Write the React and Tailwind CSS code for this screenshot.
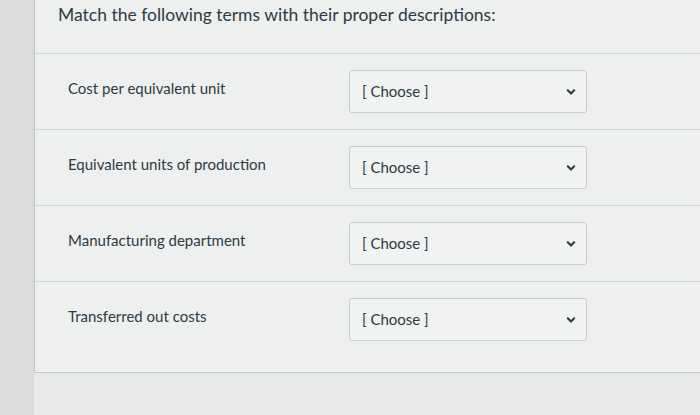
import React from "react";

function Chevron() {
  return (
    <svg width="12" height="12" viewBox="0 0 12 12" fill="none">
      <path d="M2.8 4.3 L6 7.6 L9.2 4.3" stroke="#2d3b45" strokeWidth="2.1" strokeLinecap="round" strokeLinejoin="round" />
    </svg>
  );
}

function Row({ label, last }) {
  return (
    <div className={`flex items-start border-t border-[#d2d6d5] ${last ? "h-[90px]" : "h-[76px]"}`}>
      <div className="w-[314px] pl-[33px] pt-[23px] text-[15px] text-[#2d3b45]">{label}</div>
      <div className="mt-[16px] w-[238px] h-[43px] border border-[#c7cccb] rounded-[3px] bg-[#f1f3f2] flex items-center justify-between pl-[12px] pr-[9px]">
        <span className="text-[15px] text-[#2d3b45]">[ Choose ]</span>
        <Chevron />
      </div>
    </div>
  );
}

export default function App() {
  return (
    <div className="w-[700px] h-[415px] flex bg-[#e7eae8] overflow-hidden" style={{ fontFamily: "Lato, 'Noto Sans', sans-serif" }}>
      <div className="w-[34px] h-full bg-[#d9dcdb] shrink-0" />
      <div className="flex-1 flex flex-col">
        <div className="h-[373px] bg-[#eef0ef] border-l border-b border-[#c3c8c7] flex flex-col">
          <div className="h-[53px] pl-[23px] pt-[1px] text-[17.5px] text-[#2d3b45] leading-[28px]">
            Match the following terms with their proper descriptions:
          </div>
          <Row label="Cost per equivalent unit" />
          <Row label="Equivalent units of production" />
          <Row label="Manufacturing department" />
          <Row label="Transferred out costs" last />
        </div>
      </div>
    </div>
  );
}
